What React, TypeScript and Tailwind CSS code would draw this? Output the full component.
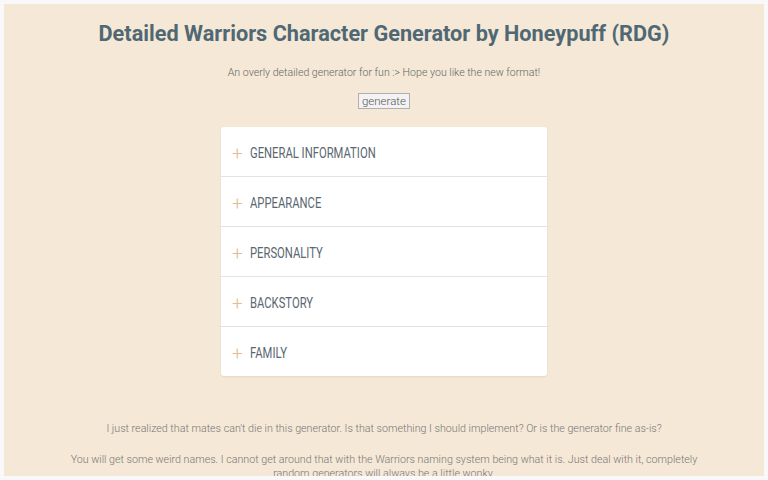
import React, { useState } from 'react';

const sections = ['General Information', 'Appearance', 'Personality', 'Backstory', 'Family'];

export default function App() {
  const [open, setOpen] = useState<string | null>(null);

  return (
    <div className="h-screen bg-[#f9f9f9] p-[4px] font-['Roboto',sans-serif]">
      <div className="h-full overflow-hidden bg-[#f5e8d6] flex flex-col items-center pt-[15px]">
        <h1 className="text-[21.7px] leading-[30px] font-bold text-[#506874]">
          Detailed Warriors Character Generator by Honeypuff (RDG)
        </h1>
        <p className="mt-[17px] text-[10.6px] leading-[14px] font-light text-[#666]">
          An overly detailed generator for fun :&gt; Hope you like the new format!
        </p>
        <button
          type="button"
          className="mt-[13px] px-[3px] h-[16px] text-[11.5px] leading-[14px] font-light text-[#555] bg-[#f3f3f3] border border-[#b0b0b0]"
        >
          generate
        </button>
        <div className="mt-[18px] w-[326px] bg-white rounded-[3px] shadow-[0_1px_2px_rgba(0,0,0,0.08)]">
          {sections.map((s, i) => (
            <div key={s} className={i > 0 ? 'border-t border-[#e2e2e2]' : ''}>
              <button
                type="button"
                onClick={() => setOpen(open === s ? null : s)}
                className="w-full h-[49px] flex items-center gap-[6px] pl-[11px] pt-[3px] text-left"
              >
                <span className="w-[12px] text-[19px] font-light text-[#e2bd90] leading-none">+</span>
                <span className="inline-block origin-left scale-x-[0.75] uppercase text-[15px] font-normal text-[#5a6770] whitespace-nowrap">
                  {s}
                </span>
              </button>
            </div>
          ))}
        </div>
        <div className="mt-[46px] text-center text-[10.7px] leading-[14px] font-light text-[#777] max-w-[640px]">
          <p>I just realized that mates can't die in this generator. Is that something I should implement? Or is the generator fine as-is?</p>
          <p className="mt-[17px]">
            You will get some weird names. I cannot get around that with the Warriors naming system being what it is. Just deal with it, completely random generators will always be a little wonky.
          </p>
        </div>
      </div>
    </div>
  );
}
